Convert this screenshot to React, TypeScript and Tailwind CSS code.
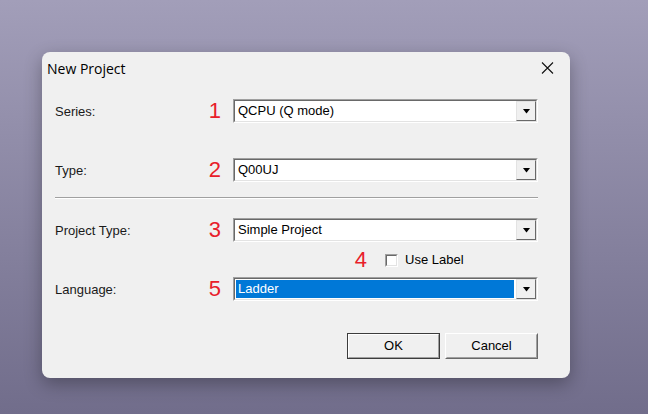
import React from 'react';

const ui = { fontFamily: '"Liberation Sans", Arial, sans-serif' };
const titleFont = { fontFamily: '"Segoe UI", "Open Sans", "Noto Sans", sans-serif' };

function Marker({ n }: { n: string }) {
  return (
    <span className="w-[24px] text-right text-[22px] leading-none text-[#e8202a]" style={ui}>
      {n}
    </span>
  );
}

function ComboBox({ value, selected = false }: { value: string; selected?: boolean }) {
  return (
    <div className="h-[24px] w-[305px] border border-b-white border-l-[#a0a0a0] border-r-white border-t-[#a0a0a0]">
      <div className="flex h-full border border-b-[#e3e3e3] border-l-[#696969] border-r-[#e3e3e3] border-t-[#696969] bg-white">
        <div className="flex flex-1 items-center pl-[1px] pr-[2px] py-[1px]">
          <span
            className={
              selected
                ? 'flex h-full w-full items-center bg-[#0078d7] pl-[2px] text-[13px] text-white'
                : 'pl-[2px] text-[13px] text-black'
            }
            style={ui}
          >
            {value}
          </span>
        </div>
        <div className="flex w-[20px] items-center justify-center border border-b-[#696969] border-l-[#e3e3e3] border-r-[#696969] border-t-[#e3e3e3] bg-[#f0f0f0]">
          <svg width="9" height="5" viewBox="0 0 9 5">
            <path d="M1 0 H8 L4.5 4.5 Z" fill="#000" />
          </svg>
        </div>
      </div>
    </div>
  );
}

function FieldRow({ label, n, children }: { label: string; n: string; children: React.ReactNode }) {
  return (
    <div className="flex h-[24px] items-center">
      <span className="w-[142px] pt-[1px] text-[13px] text-[#1a1a1a]" style={ui}>
        {label}
      </span>
      <Marker n={n} />
      <div className="ml-[12px]">{children}</div>
    </div>
  );
}

function Button({ label, isDefault = false }: { label: string; isDefault?: boolean }) {
  return (
    <div
      className={
        isDefault
          ? 'h-[26px] w-[93px] border border-[#3c3c3c]'
          : 'h-[26px] w-[93px] border border-b-[#696969] border-l-white border-r-[#696969] border-t-white'
      }
    >
      <div
        className={
          isDefault
            ? 'flex h-full items-center justify-center border border-b-[#a0a0a0] border-l-white border-r-[#a0a0a0] border-t-white bg-[#f0f0f0] text-[13px] text-black'
            : 'flex h-full items-center justify-center border border-b-[#a0a0a0] border-l-[#f0f0f0] border-r-[#a0a0a0] border-t-[#f0f0f0] bg-[#f0f0f0] text-[13px] text-black'
        }
        style={ui}
      >
        {label}
      </div>
    </div>
  );
}

export default function App() {
  return (
    <div className="h-[414px] w-[648px] overflow-hidden bg-gradient-to-b from-[#a29eb9] to-[#716d8b] pl-[42px] pt-[52px]">
      <div className="flex h-[326px] w-[528px] flex-col rounded-lg bg-[#f0f0f0] shadow-[0_6px_18px_rgba(0,0,0,0.3)]">
        <div className="flex h-[32px] items-center justify-between pl-[5px] pr-[16px]">
          <span className="text-[14px] text-black" style={titleFont}>
            New Project
          </span>
          <svg width="13" height="12" viewBox="0 0 13 12">
            <path d="M1 0.5 L12 11.5 M12 0.5 L1 11.5" stroke="#111" strokeWidth="1.1" />
          </svg>
        </div>

        <div className="flex flex-col pl-[13px] pr-[32px]">
          <div className="mt-[15px]">
            <FieldRow label="Series:" n="1">
              <ComboBox value="QCPU (Q mode)" />
            </FieldRow>
          </div>
          <div className="mt-[35px]">
            <FieldRow label="Type:" n="2">
              <ComboBox value="Q00UJ" />
            </FieldRow>
          </div>
          <div className="mt-[15px] h-[2px] border-b border-t border-b-white border-t-[#a0a0a0]" />
          <div className="mt-[19px]">
            <FieldRow label="Project Type:" n="3">
              <ComboBox value="Simple Project" />
            </FieldRow>
          </div>
          <div className="mt-[10px] flex h-[16px] items-center pl-[288px]">
            <Marker n="4" />
            <div className="ml-[18px] h-[13px] w-[13px] border border-b-white border-l-[#a0a0a0] border-r-white border-t-[#a0a0a0]">
              <div className="h-full w-full border border-b-[#e3e3e3] border-l-[#696969] border-r-[#e3e3e3] border-t-[#696969] bg-white" />
            </div>
            <span className="ml-[7px] text-[13px] text-black" style={ui}>
              Use Label
            </span>
          </div>
          <div className="mt-[9px]">
            <FieldRow label="Language:" n="5">
              <ComboBox value="Ladder" selected />
            </FieldRow>
          </div>
          <div className="mt-[32px] flex justify-end gap-[5px]">
            <Button label="OK" isDefault />
            <Button label="Cancel" />
          </div>
        </div>
      </div>
    </div>
  );
}
